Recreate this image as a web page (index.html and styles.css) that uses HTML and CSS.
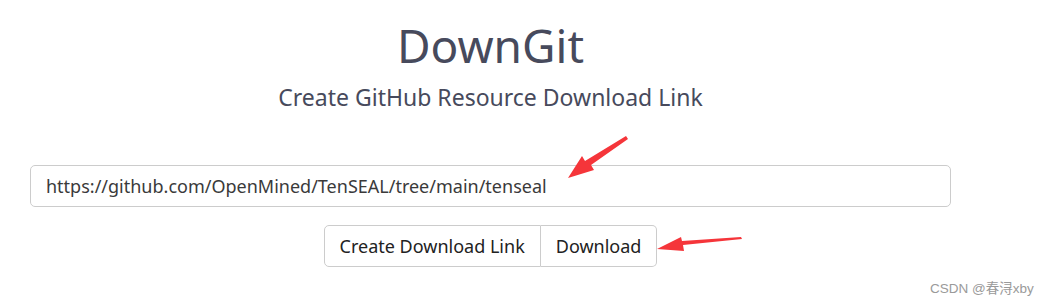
FILE: index.html
```html
<!DOCTYPE html>
<html lang="en">
<head>
  <meta charset="UTF-8">
  <title>DownGit</title>
  <link rel="stylesheet" href="styles.css">
</head>
<body>

  <div class="page">
    <h1>DownGit</h1>
    <p class="subtitle">Create GitHub Resource Download Link</p>

    <input type="text" class="url-input" value="https://github.com/OpenMined/TenSEAL/tree/main/tenseal" />

    <div class="btn-group">
      <button class="btn">Create Download Link</button>
      <button class="btn">Download</button>
    </div>
  </div>

  <!-- annotation arrows drawn over the screenshot -->
  <svg class="arrows" width="1051" height="304" viewBox="0 0 1051 304">
    <polygon points="628,139 591,165 594,170 568,178 582,156 585,161 626,136" fill="#f5353a" />
    <polygon points="742,239 683,245 684,251 657,249 681,237 682,241 741,237" fill="#f5353a" />
  </svg>

  <div class="watermark">CSDN @春浔xby</div>

</body>
</html>
```

FILE: styles.css
```css
body {
  font-family: 'Noto Sans', 'Open Sans', sans-serif;
  background-color: #ffffff;
  margin: 0;
  padding: 0;
  position: relative;
  width: 1051px;
  height: 304px;
  overflow: hidden;
}

.page {
  width: 921px;
  margin-left: 30px;
  padding-top: 16px;
  display: flex;
  flex-direction: column;
  align-items: center;
}

h1 {
  margin: 0;
  font-size: 46px;
  font-weight: 400;
  line-height: 58px;
  color: #474a5c;
}

.subtitle {
  margin: 8px 0 0;
  font-size: 23px;
  line-height: 30px;
  color: #474a5c;
}

.url-input {
  box-sizing: border-box;
  width: 921px;
  height: 42px;
  margin-top: 53px;
  padding: 0 15px;
  font-family: inherit;
  font-size: 18px;
  color: #3a3a3a;
  border: 1px solid #cccccc;
  border-radius: 5px;
  outline: none;
}

.btn-group {
  display: flex;
  margin-top: 18px;
}

.btn {
  height: 42px;
  padding: 0 15px;
  font-family: inherit;
  font-size: 18px;
  color: #222;
  background: #ffffff;
  border: 1px solid #cccccc;
  cursor: pointer;
}

.btn:first-child {
  border-radius: 5px 0 0 5px;
}

.btn:last-child {
  border-left: none;
  border-radius: 0 5px 5px 0;
}

.arrows {
  position: absolute;
  left: 0;
  top: 0;
  pointer-events: none;
}

.watermark {
  position: absolute;
  left: 930px;
  top: 277px;
  font-family: 'Liberation Sans', 'Noto Sans CJK SC', sans-serif;
  font-size: 13.5px;
  color: #9a9a9a;
}
```
